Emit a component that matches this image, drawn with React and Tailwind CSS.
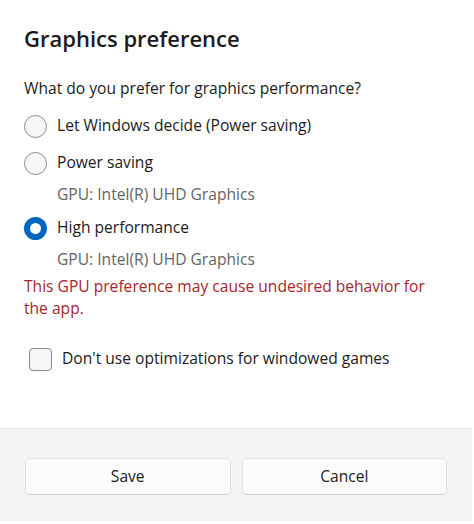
const FONT = { fontFamily: '"Open Sans", "Noto Sans", sans-serif' }

const Radio = ({ checked, label }) => (
  <div className="flex items-center h-[32px]">
    {checked ? (
      <span className="w-[23px] h-[23px] rounded-full border-[6px] border-[#0067c0] bg-white shrink-0" />
    ) : (
      <span className="w-[23px] h-[23px] rounded-full border border-[#8a8a8a] bg-[#f6f6f6] shrink-0" />
    )}
    <span className="ml-[10px] text-[15.6px] text-[#1b1b1b]">{label}</span>
  </div>
)

export default function App() {
  return (
    <div className="w-[474px] h-[524px] bg-white flex flex-col" style={FONT}>
      <div className="px-[24px]">
        <h1 className="pt-[22px] text-[22px] leading-[32px] font-semibold text-[#1b1b1b]">Graphics preference</h1>
        <p className="mt-[22px] text-[15.6px] leading-[24px] text-[#1b1b1b]">What do you prefer for graphics performance?</p>

        <div className="mt-[10px]">
          <Radio label="Let Windows decide (Power saving)" />
        </div>
        <div className="mt-[5px]">
          <Radio label="Power saving" />
        </div>
        <p className="mt-[3px] pl-[33px] text-[15.6px] leading-[24px] text-[#646464]">GPU: Intel(R) UHD Graphics</p>
        <div className="mt-[6px]">
          <Radio checked label="High performance" />
        </div>
        <p className="mt-[3px] pl-[33px] text-[15.6px] leading-[24px] text-[#646464]">GPU: Intel(R) UHD Graphics</p>
        <p className="mt-[4px] text-[15.6px] leading-[22px] text-[#a4262c]">
          This GPU preference may cause undesired behavior for the app.
        </p>

        <div className="mt-[24px] h-[32px] flex items-center pl-[5px]">
          <span className="w-[23px] h-[23px] rounded-[4px] border border-[#8a8a8a] bg-[#f6f6f6] shrink-0" />
          <span className="ml-[10px] text-[15.6px] text-[#1b1b1b]">Don't use optimizations for windowed games</span>
        </div>
      </div>

      <div className="mt-[53px] flex-1 mb-[3px] mr-[2px] bg-[#f3f3f3] border-t border-[#e5e5e5] px-[25px] pt-[29px]">
        <div className="flex gap-[11px]">
          <button className="flex-1 h-[37px] rounded-[5px] bg-[#fbfbfb] border border-[#e0e0e0] border-b-[#cccccc] text-[15.6px] text-[#1b1b1b]">
            Save
          </button>
          <button className="flex-1 h-[37px] rounded-[5px] bg-[#fbfbfb] border border-[#e0e0e0] border-b-[#cccccc] text-[15.6px] text-[#1b1b1b]">
            Cancel
          </button>
        </div>
      </div>
    </div>
  )
}
